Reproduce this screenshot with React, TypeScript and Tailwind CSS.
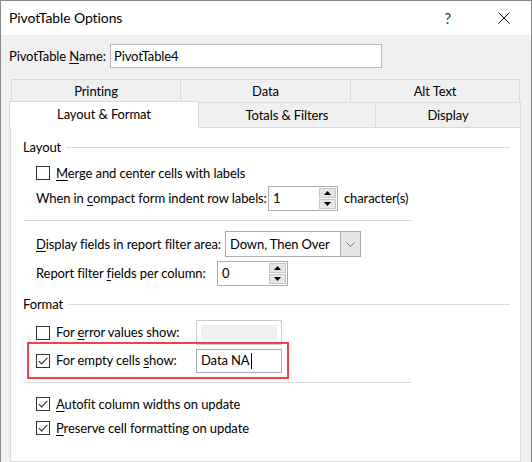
import React from "react";

const F = { fontFamily: '"Segoe UI", Lato, "Noto Sans", sans-serif' };

function Box({ checked }: { checked?: boolean }) {
  return (
    <span className="w-[14px] h-[14px] border border-[#333333] bg-white flex items-center justify-center shrink-0">
      {checked && (
        <svg width="12" height="12" viewBox="0 0 12 12">
          <path d="M1.8 6.2 L4.6 9 L10.4 2.8" fill="none" stroke="#333333" strokeWidth="1.1" />
        </svg>
      )}
    </span>
  );
}

function Up() {
  return (
    <svg width="7" height="4" viewBox="0 0 7 4">
      <polygon points="0,4 3.5,0 7,4" fill="#000" />
    </svg>
  );
}
function Down() {
  return (
    <svg width="7" height="4" viewBox="0 0 7 4">
      <polygon points="0,0 7,0 3.5,4" fill="#000" />
    </svg>
  );
}

function Spin({ value, className }: { value: string; className: string }) {
  return (
    <div className={className}>
      <div className="flex-1 flex items-center pl-[4px] text-[#000]">{value}</div>
      <div className="w-[18px] flex flex-col gap-px py-px pr-px">
        <div className="flex-1 bg-[#e5e5e5] border border-[#c6c6c6] flex items-center justify-center">
          <Up />
        </div>
        <div className="flex-1 bg-[#e5e5e5] border border-[#c6c6c6] flex items-center justify-center">
          <Down />
        </div>
      </div>
    </div>
  );
}

function Header({ label, lineClass }: { label: string; lineClass: string }) {
  return (
    <div className="h-[20px] flex items-center">
      <span>{label}</span>
      <div className={lineClass} />
    </div>
  );
}

export default function App() {
  return (
    <div
      className="w-[532px] h-[462px] overflow-hidden bg-[#f0f0f0] border-l border-t border-r border-[#8a8a8a] flex flex-col text-[13px] tracking-[-0.1px] text-[#000] leading-none whitespace-nowrap"
      style={F}
    >
      {/* Title bar */}
      <div className="h-[34px] bg-white flex items-center shrink-0">
        <span className="ml-[8px] text-[14px] text-[#000]">PivotTable Options</span>
        <span className="ml-auto text-[15px] text-[#333] mr-[47px]">?</span>
        <svg className="mr-[21px] shrink-0" width="12" height="12" viewBox="0 0 12 12">
          <path d="M0.5 0.5 L11.5 11.5 M11.5 0.5 L0.5 11.5" stroke="#111" strokeWidth="1" />
        </svg>
      </div>

      {/* Name row */}
      <div className="mt-[9px] h-[24px] flex items-center shrink-0">
        <span className="ml-[8px] w-[101px] shrink-0">
          PivotTable <u className="underline-offset-2">N</u>ame:
        </span>
        <div className="w-[272px] h-[24px] shrink-0 border border-[#b9b9b9] bg-white flex items-center pl-[3px]">
          PivotTable4
        </div>
      </div>

      {/* Tabs top row */}
      <div className="mt-[11px] ml-[10px] h-[23px] flex shrink-0">
        <div className="w-[169px] border-l border-t border-[#d9d9d9] flex items-center justify-center">Printing</div>
        <div className="w-[170px] border-l border-t border-[#d9d9d9] flex items-center justify-center">Data</div>
        <div className="w-[170px] border-l border-t border-r border-[#d9d9d9] flex items-center justify-center">Alt Text</div>
      </div>
      {/* Tabs bottom row */}
      <div className="ml-[8px] h-[25px] flex shrink-0 relative z-10">
        <div className="w-[190px] h-[27px] -mt-px bg-white border-l border-t border-r border-[#d9d9d9] flex items-center justify-center pb-[1px]">
          Layout &amp; Format
        </div>
        <div className="w-[176px] border-t border-[#d9d9d9] flex items-center justify-center">Totals &amp; Filters</div>
        <div className="w-[146px] border-l border-t border-r border-[#d9d9d9] flex items-center justify-center">Display</div>
      </div>

      {/* Panel */}
      <div className="ml-[9px] w-[511px] flex-1 bg-white border border-[#d9d9d9] pl-[12px] pt-[9px] flex flex-col">
        <Header label="Layout" lineClass="ml-[5px] mr-[10px] flex-1 h-px bg-[#dcdcdc]" />

        <div className="mt-[4px] h-[24px] pl-[13px] flex items-center">
          <Box />
          <span className="ml-[6px]">
            <u className="underline-offset-2">M</u>erge and center cells with labels
          </span>
        </div>

        <div className="mt-[1px] h-[25px] pl-[13px] flex items-center">
          <span className="w-[232px] shrink-0">
            When in <u className="underline-offset-2">c</u>ompact form indent row labels:
          </span>
          <Spin value="1" className="w-[70px] h-[25px] shrink-0 border border-[#adadad] bg-white flex" />
          <span className="ml-[6px]">character(s)</span>
        </div>

        <div className="mt-[9px] w-[389px] h-px bg-[#dcdcdc]" />

        <div className="mt-[10px] h-[26px] pl-[13px] flex items-center">
          <span className="w-[189px] shrink-0">
            <u className="underline-offset-2">D</u>isplay fields in report filter area:
          </span>
          <div className="w-[136px] h-[26px] shrink-0 border border-[#adadad] bg-white flex">
            <div className="flex-1 flex items-center pl-[4px]">Down, Then Over</div>
            <div className="w-[20px] bg-[#e5e5e5] border-l border-[#adadad] flex items-center justify-center">
              <svg width="9" height="5" viewBox="0 0 9 5">
                <path d="M0.5 0.5 L4.5 4.5 L8.5 0.5" fill="none" stroke="#707070" strokeWidth="1" />
              </svg>
            </div>
          </div>
        </div>

        <div className="mt-[4px] h-[25px] pl-[13px] flex items-center">
          <span className="w-[181px] shrink-0">
            Report filter <u className="underline-offset-2">f</u>ields per column:
          </span>
          <Spin value="0" className="w-[71px] h-[25px] shrink-0 border border-[#adadad] bg-white flex" />
        </div>

        <div className="mt-[8px]">
          <Header label="Format" lineClass="ml-[5px] mr-[10px] flex-1 h-px bg-[#dcdcdc]" />
        </div>

        <div className="mt-[6px] h-[25px] pl-[13px] flex items-center">
          <div className="w-[160px] shrink-0 flex items-center">
            <Box />
            <span className="ml-[6px]">
              For <u className="underline-offset-2">e</u>rror values show:
            </span>
          </div>
          <div className="w-[86px] h-[25px] shrink-0 border border-[#cccccc] bg-white p-[4px]">
            <div className="w-full h-full bg-[#f0f0f0]" />
          </div>
        </div>

        <div className="-mt-[3px] ml-[4px] w-[262px] h-[37px] border-2 border-[#ee4444] pl-[7px] flex items-center relative z-10">
          <div className="w-[160px] shrink-0 flex items-center">
            <Box checked />
            <span className="ml-[6px]">
              For empty cells <u className="underline-offset-2">s</u>how:
            </span>
          </div>
          <div className="w-[86px] h-[24px] shrink-0 border border-[#adadad] bg-white flex items-center pl-[4px]">
            Data NA<span className="inline-block w-px h-[16px] bg-black ml-px" />
          </div>
        </div>

        <div className="mt-[3px] w-[389px] h-px bg-[#dcdcdc]" />

        <div className="mt-[11px] h-[20px] pl-[13px] flex items-center">
          <Box checked />
          <span className="ml-[6px]">
            <u className="underline-offset-2">A</u>utofit column widths on update
          </span>
        </div>
        <div className="mt-[4px] h-[20px] pl-[13px] flex items-center">
          <Box checked />
          <span className="ml-[6px]">
            <u className="underline-offset-2">P</u>reserve cell formatting on update
          </span>
        </div>
      </div>
    </div>
  );
}
